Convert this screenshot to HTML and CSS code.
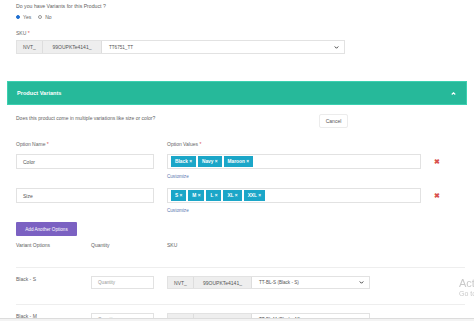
FILE: index.html
```html
<!DOCTYPE html>
<html lang="en">
<head>
    <meta charset="UTF-8">
    <meta name="viewport" content="width=device-width, initial-scale=1.0">
    <title>Product variants</title>
    <link rel="stylesheet" href="styles.css">
</head>
<body>
    <section class="top">
        <p class="question">Do you have Variants for this Product ?</p>
        <div class="radios">
            <label><span class="radio on"></span>Yes</label>
            <label><span class="radio"></span>No</label>
        </div>
        <p class="label">SKU <span class="req">*</span></p>
        <div class="skugroup sku-top">
            <span class="addon a1">NVT_</span>
            <span class="addon a2">99OUPKTe4141_</span>
            <span class="select">TT6751_TT
                <svg class="chev" viewBox="0 0 10 6"><polyline points="1.5,1 5,4.5 8.5,1" /></svg>
            </span>
        </div>
    </section>

    <section class="panel">
        <header class="panel-head">
            <h2>Product Variants</h2>
            <svg class="up" viewBox="0 0 10 6"><polyline points="1.5,5 5,1.5 8.5,5" /></svg>
        </header>
        <div class="panel-body">
            <div class="intro">
                <p>Does this product come in multiple variations like size or color?</p>
                <button type="button" class="cancel">Cancel</button>
            </div>

            <div class="options">
                <p class="label">Option Name <span class="req">*</span></p>
                <p class="label">Option Values <span class="req">*</span></p>
                <span></span>

                <div class="input">Color</div>
                <div class="tags">
                    <span class="tag">Black ×</span>
                    <span class="tag">Navy ×</span>
                    <span class="tag">Maroon ×</span>
                </div>
                <span class="del">✖</span>
                <span></span>
                <a class="custom">Customize</a>
                <span></span>

                <div class="input">Size</div>
                <div class="tags">
                    <span class="tag">S ×</span>
                    <span class="tag">M ×</span>
                    <span class="tag">L ×</span>
                    <span class="tag">XL ×</span>
                    <span class="tag">XXL ×</span>
                </div>
                <span class="del">✖</span>
                <span></span>
                <a class="custom">Customize</a>
                <span></span>
            </div>

            <button type="button" class="add">Add Another Options</button>

            <div class="variants vhead">
                <span>Variant Options</span>
                <span>Quantity</span>
                <span>SKU</span>
            </div>
            <div class="divider"></div>
            <div class="variants vrow">
                <span>Black - S</span>
                <div class="input qty">Quantity</div>
                <div class="skugroup">
                    <span class="addon b1">NVT_</span>
                    <span class="addon b2">99OUPKTe4141_</span>
                    <span class="select">TT-BL-S (Black - S)
                        <svg class="chev" viewBox="0 0 10 6"><polyline points="1.5,1 5,4.5 8.5,1" /></svg>
                    </span>
                </div>
            </div>
            <div class="divider"></div>
            <div class="variants vrow">
                <span>Black - M</span>
                <div class="input qty">Quantity</div>
                <div class="skugroup">
                    <span class="addon b1">NVT_</span>
                    <span class="addon b2">99OUPKTe4141_</span>
                    <span class="select">TT-BL-M (Black - M)
                        <svg class="chev" viewBox="0 0 10 6"><polyline points="1.5,1 5,4.5 8.5,1" /></svg>
                    </span>
                </div>
            </div>
        </div>
    </section>

    <div class="watermark">
        <span class="wm1">Activate Windows</span>
        <span class="wm2">Go to Settings to activate Windows.</span>
    </div>
    <div class="hscroll"></div>
</body>
</html>
```

FILE: styles.css
```css
body{
    margin: 0;
    width: 474px;
    height: 321px;
    overflow: hidden;
    font-family: "Liberation Sans", Arial, sans-serif;
    font-size: 5px;
    color: #5f5f5f;
    background: #fff;
}
p{margin: 0;}

/* top part */
.top{padding: 3px 16px 0;}
.question{height: 6px;line-height: 6px;font-size: 5.2px;}
.radios{display: flex;gap: 7px;margin-top: 5px;height: 6px;align-items: center;}
.radios label{display: flex;align-items: center;gap: 3px;}
.radio{width: 4px;height: 4px;border-radius: 50%;border: 0.5px solid #999;box-sizing: border-box;}
.radio.on{background: #1f6fd1;border-color: #1f6fd1;}
.label{height: 6px;line-height: 6px;color: #666;}
.top .label{margin-top: 10px;}
.req{color: #d9534f;}

.skugroup{display: flex;height: 13px;border: 1px solid #e2e2e2;box-sizing: border-box;background: #fff;}
.sku-top{margin-top: 4px;width: 329px;height: 14px;}
.addon{display: flex;align-items: center;justify-content: center;background: #eee;border-right: 1px solid #ddd;color: #555;}
.a1{width: 25px;}
.a2{width: 58px;}
.b1{width: 25px;}
.b2{width: 57px;}
.select{flex: 1;display: flex;align-items: center;padding: 0 5px 0 7px;color: #555;font-size: 4.6px;}
.chev{width: 5px;height: 3px;margin-left: auto;fill: none;stroke: #444;stroke-width: 2;}

/* panel */
.panel{margin: 27px 7px 0;}
.panel-head{height: 24px;background: #26b99a;display: flex;align-items: center;justify-content: space-between;padding: 0 9px;border: 1px solid #3bd0b0;box-sizing: border-box;}
.panel-head h2{margin: 0;color: #fff;font-size: 5.6px;font-weight: bold;}
.up{width: 5px;height: 3px;fill: none;stroke: #fff;stroke-width: 2.2;margin-right: 1px;}
.panel-body{padding: 0 9px;}

.intro{display: flex;align-items: flex-start;margin-top: 9px;height: 14px;}
.intro p{margin-top: 1px;line-height: 6px;}
.cancel{margin-left: auto;margin-right: 110px;width: 29px;height: 14px;padding: 0;border: 1px solid #ececec;border-radius: 2px;background: #fff;font-family: inherit;font-size: 5px;color: #555;}

.options{display: grid;grid-template-columns: 138px 254px auto;column-gap: 13px;margin-top: 13px;align-items: center;}
.input{height: 15px;border: 1px solid #e2e2e2;box-sizing: border-box;display: flex;align-items: center;padding-left: 6px;color: #555;background: #fff;}
.options .input, .options .tags{margin-top: 7px;}
.tags{height: 15px;border: 1px solid #e2e2e2;box-sizing: border-box;display: flex;align-items: center;gap: 2px;padding-left: 3px;}
.tag{height: 11px;display: flex;align-items: center;padding: 0 4px;background: #1ba6c8;color: #fff;font-weight: bold;font-size: 4.8px;white-space: nowrap;}
.del{margin-top: 7px;color: #d9534f;font-size: 7px;font-weight: bold;}
.custom{margin-top: 4px;height: 8px;line-height: 8px;color: #5a7ab0;font-size: 4.6px;}

.add{display: block;margin-top: 7px;width: 61px;height: 14px;padding: 0;border: 0;border-radius: 1px;background: #7b61c2;color: #fff;font-family: inherit;font-size: 4.6px;}

.variants{display: grid;grid-template-columns: 75px 63px 216px;column-gap: 0;}
.variants > :nth-child(3){margin-left: 13px;}
.vhead{margin-top: 6px;height: 6px;line-height: 6px;}
.divider{height: 1px;background: #eee;margin: 19px -7px 0 0;}
.vrow{margin-top: 8px;height: 13px;}
.vrow > span{line-height: 6px;}
.vrow .input{height: 13px;color: #999;font-size: 4.6px;}
.vrow + .divider{margin-top: 15px;}

.watermark{position: fixed;left: 459px;top: 277px;display: flex;flex-direction: column;color: #c9c9c9;white-space: nowrap;}
.wm1{font-size: 11px;line-height: 12px;}
.wm2{font-size: 7px;line-height: 9px;}
.hscroll{position: fixed;left: 0;right: 0;bottom: 0;height: 2px;background: #f3f3f3;border-top: 1px solid #dcdcdc;}
```
